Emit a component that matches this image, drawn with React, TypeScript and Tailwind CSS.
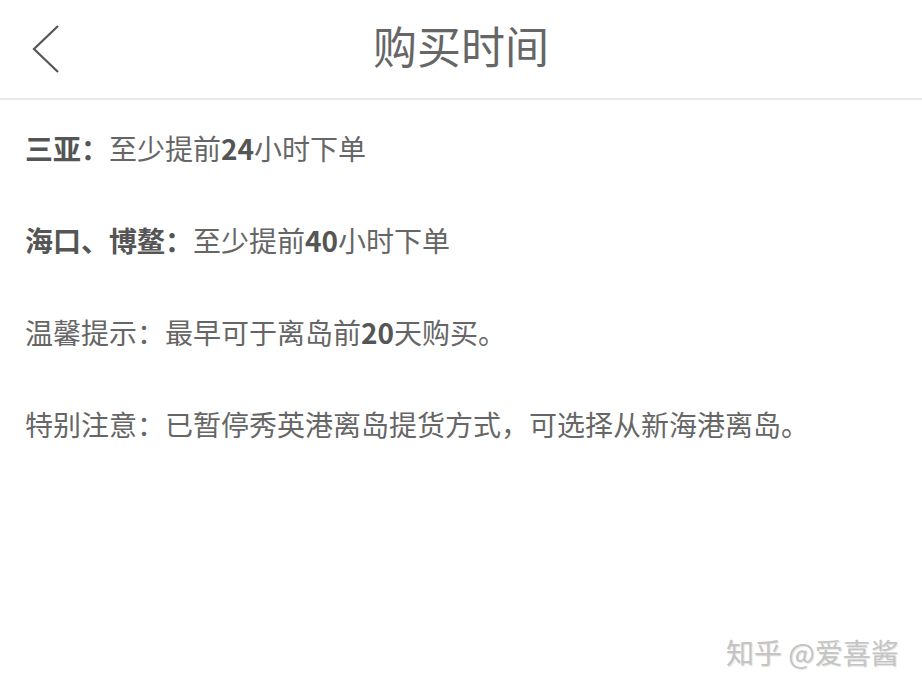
import React, { FC } from 'react'

const rows: { label?: string; parts: { text: string; bold?: boolean }[] }[] = [
  {
    label: '三亚：',
    parts: [{ text: '至少提前' }, { text: '24', bold: true }, { text: '小时下单' }]
  },
  {
    label: '海口、博鳌：',
    parts: [{ text: '至少提前' }, { text: '40', bold: true }, { text: '小时下单' }]
  },
  {
    parts: [{ text: '温馨提示：最早可于离岛前' }, { text: '20', bold: true }, { text: '天购买。' }]
  },
  {
    parts: [{ text: '特别注意：已暂停秀英港离岛提货方式，可选择从新海港离岛。' }]
  }
]

const App: FC = (): JSX.Element => {
  return (
    <div
      className="relative h-[691px] w-[922px] overflow-hidden bg-white text-[#666]"
      style={{ fontFamily: '"Noto Sans CJK SC", "Noto Sans", sans-serif' }}
    >
      {/* Header */}
      <header className="relative flex h-[100px] items-center justify-center border-b-2 border-[#e8e8e8]">
        <svg
          className="absolute left-[30px] top-[24px]"
          width="32"
          height="50"
          viewBox="0 0 32 50"
          fill="none"
          stroke="#555"
          strokeWidth="2.2"
        >
          <path d="M28 2 L4 25 L28 48" />
        </svg>
        <h1 className="pb-[8px] text-[44px] font-normal text-[#666]">购买时间</h1>
      </header>

      {/* Content */}
      <main className="px-[25px] pt-[2px]">
        {rows.map((row, i) => (
          <p key={i} className="text-[28px] leading-[92px] whitespace-nowrap">
            {row.label !== undefined && <span className="font-bold text-[#555]">{row.label}</span>}
            {row.parts.map((p, j) => (
              <span key={j} className={p.bold === true ? 'font-bold text-[#555]' : ''}>
                {p.text}
              </span>
            ))}
          </p>
        ))}
      </main>

      {/* Watermark */}
      <div
        className="absolute left-[726px] top-[631px] text-[28px] text-[#c4c4c4]"
        style={{ textShadow: '1px 1px 1px rgba(0,0,0,0.12)' }}
      >
        知乎 @爱喜酱
      </div>
    </div>
  )
}

export default App
